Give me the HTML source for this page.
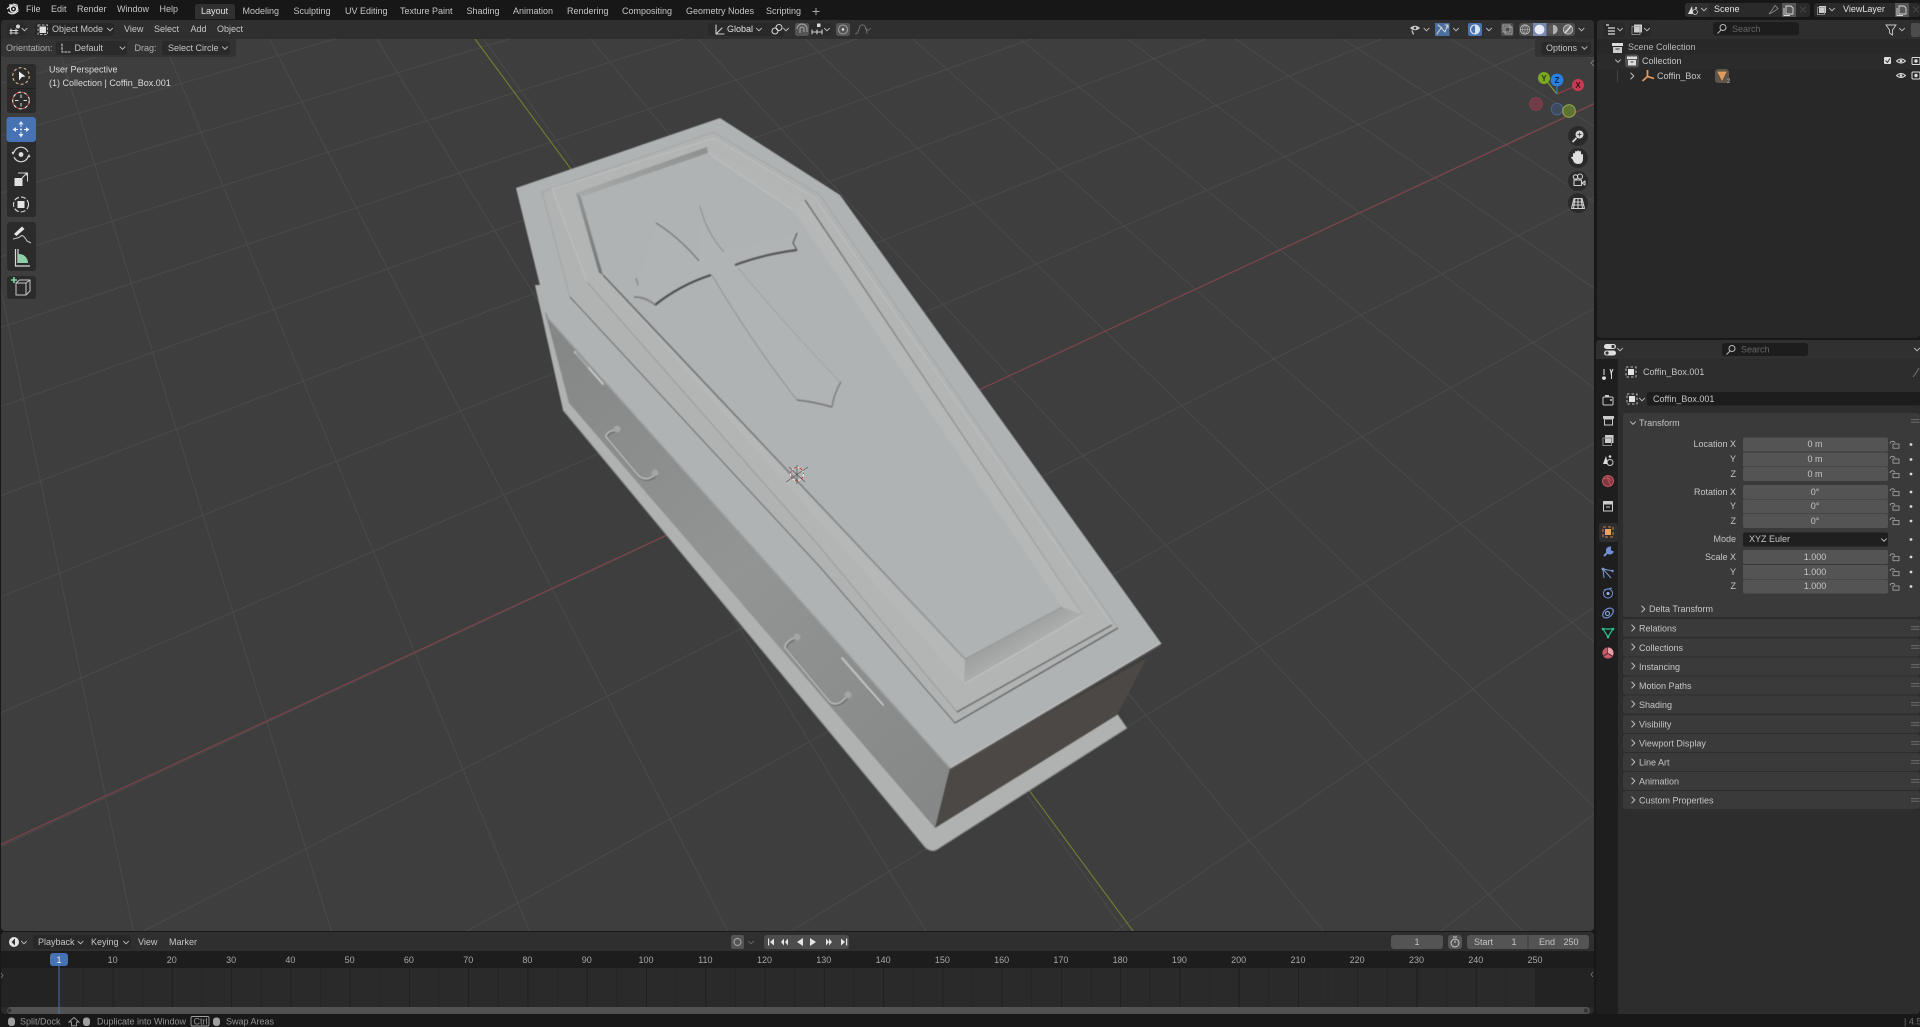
<!DOCTYPE html>
<html><head><meta charset="utf-8"><title>Blender</title>
<style>
html,body{margin:0;padding:0;width:1920px;height:1027px;overflow:hidden;background:#181818}
svg{display:block;filter:blur(.3px);overflow:hidden}
text{font-family:"Liberation Sans",sans-serif;font-size:9px;fill:#c6c6c6}
.d{fill:#959595}.b{fill:#e2e2e2}.c{text-anchor:middle}.r{text-anchor:end}
.ic{fill:none;stroke:#cfcfcf;stroke-width:1.1;stroke-linecap:round;stroke-linejoin:round}
.ch{fill:none;stroke:#bdbdbd;stroke-width:1;stroke-linecap:round;stroke-linejoin:round}
.num{fill:#a8a8a8;text-anchor:middle}
.soft{filter:blur(.45px)}
</style></head><body>
<svg width="1920" height="1027" viewBox="0 0 1920 1027" xmlns="http://www.w3.org/2000/svg">
<defs>
<clipPath id="vp"><rect x="1" y="20" width="1593" height="911" rx="4"/></clipPath>
<path id="cd" class="ch" d="M-2.5,-1.2L0,1.3L2.5,-1.2"/>
<path id="cr" class="ch" d="M-1.2,-3L1.8,0L-1.2,3"/>
<g id="lock"><path d="M-5,-1.5a2.6,2.6 0 0 1 5,-0.5" fill="none" stroke="#a8a8a8" stroke-width=".8"/><rect x="-2" y="-1" width="6" height="4.2" fill="none" stroke="#a8a8a8" stroke-width=".8"/></g>
<g id="hdl"><path d="M-4,-1.4H4.5M-4,1.2H4.5" stroke="#6a6a6a" stroke-width="1"/></g>
<linearGradient id="bevT" x1="0" y1="0" x2="0" y2="1"><stop offset="0" stop-color="#8e8f8f"/><stop offset="1" stop-color="#a8aaaa"/></linearGradient>
<linearGradient id="bevL" gradientUnits="userSpaceOnUse" x1="576" y1="193" x2="600" y2="273"><stop offset="0" stop-color="#939494"/><stop offset="1" stop-color="#767777"/></linearGradient>
<linearGradient id="edge" gradientUnits="userSpaceOnUse" x1="603" y1="275" x2="965" y2="659"><stop offset="0" stop-color="#6a6b6b"/><stop offset=".5" stop-color="#7a7b7b"/><stop offset="1" stop-color="#98999a"/></linearGradient>
<linearGradient id="edgeR" gradientUnits="userSpaceOnUse" x1="805" y1="200" x2="1083" y2="615"><stop offset="0" stop-color="#666767"/><stop offset=".4" stop-color="#8a8b8b"/><stop offset="1" stop-color="#a8aaaa"/></linearGradient>
<linearGradient id="side" gradientUnits="userSpaceOnUse" x1="552" y1="325" x2="950" y2="800"><stop offset="0" stop-color="#858787"/><stop offset=".5" stop-color="#939494"/><stop offset="1" stop-color="#868888"/></linearGradient>
<linearGradient id="bevB" gradientUnits="userSpaceOnUse" x1="1000" y1="640" x2="1015" y2="665"><stop offset="0" stop-color="#9fa1a1"/><stop offset="1" stop-color="#b2b4b4"/></linearGradient>
<pattern id="tl" patternUnits="userSpaceOnUse" x="53.3" y="968" width="59.27" height="39"><rect width="59.27" height="39" fill="#2a2a2a"/><rect width="1" height="39" fill="#1f1f1f"/><rect x="29.6" width="1" height="39" fill="#252525"/></pattern>
</defs>

<!-- base -->
<rect width="1920" height="1027" fill="#181818"/>

<!-- VIEWPORT -->
<g clip-path="url(#vp)">
<rect x="0" y="20" width="1600" height="912" fill="#3e3e3e"/>
<path id="grid" d="" fill="none" stroke="#4a4a4a" stroke-width="1"/>
<path d="M0,845L1594,104" stroke="#84424c" stroke-width="1.1" fill="none"/>
<path d="M475,39L1133,931" stroke="#6e8030" stroke-width="1.1" fill="none"/>

<!-- coffin -->
<g class="soft">
<!-- base band -->
<path d="M535,285L563,410L925,847Q930,852 936,850L1127,728L1116,712L935,800L569,395L560,320L545,285Z" fill="#b0b2b2"/>
<path d="M563,410L925,847Q930,852 936,850L1127,728" fill="none" stroke="#8f9090" stroke-width="1"/>
<!-- side -->
<path d="M545,312L569,403L935,828L955,762Z" fill="url(#side)"/>
<!-- front -->
<path d="M950,768L935,828L1117,715L1147,658Z" fill="#4c4845"/>
<!-- lid -->
<path d="M516,188L720,118L840,195L1161,643L950,768L548,318Z" fill="#b0b3b3"/>
<path d="M1161,643L950,768" stroke="#bcbebe" stroke-width="1.5" fill="none"/>
<path d="M548,318L950,768" stroke="#a0a2a2" stroke-width="1.5" fill="none"/>
<path d="M950,770L1161,645" stroke="#5c5a58" stroke-width=".8" fill="none"/>
<!-- outer ring lines -->
<path d="M542,192L713,132L820,195L1118,628L955,723L820,567L570,297Z" fill="#b1b3b3" stroke="#a3a5a5" stroke-width="1"/>
<path d="M570,297L820,567L955,723" fill="none" stroke="#747575" stroke-width="1.1"/>
<path d="M955,723L1118,628" fill="none" stroke="#5f6060" stroke-width="1.3"/>
<path d="M552,189L714,138L815,198L1112,625L957,712L820,547L587,282Z" fill="#b3b5b5" stroke="#bfc1c1" stroke-width="1"/>
<path d="M587,282L820,547L957,712" fill="none" stroke="#9a9b9b" stroke-width="1.1"/>
<path d="M957,712L1112,625" fill="none" stroke="#686969" stroke-width="1.3"/>
<!-- plate -->
<path d="M576,193L707,147L805,200L1083,615L964,684L599,273Z" fill="#b4b6b6"/>
<path d="M576,193L707,147L708,153L581,197Z" fill="url(#bevT)"/>
<path d="M576,193L599,273L603,275L581,197Z" fill="url(#bevL)"/>
<path d="M964,684L1083,615L1062,607L965,659Z" fill="url(#bevB)"/>
<path d="M599,273L964,684L965,659L603,275Z" fill="#b6b8b8"/>
<path d="M805,200L1083,615L1062,607L793,210Z" fill="#b6b8b8"/>
<path d="M581,197L708,153L793,210L1062,607L965,659L603,275Z" fill="#b0b3b3"/>
<path d="M603,275L965,659" stroke="url(#edge)" stroke-width="1.6" fill="none"/>
<path d="M805,200L1083,615" stroke="url(#edgeR)" stroke-width="1.3" fill="none"/>
<path d="M965,659L1062,607" stroke="#989a9a" stroke-width="1" fill="none"/>
<path d="M964,684L1083,615" stroke="#c4c6c6" stroke-width="1" fill="none"/>
<path d="M708,153L793,210" stroke="#c0c2c2" stroke-width="1" fill="none"/>
<!-- cross -->
<path d="M634,297L655,305Q680,285 711,275L797,400Q815,402 832,407Q834,393 841,382L738,268Q770,255 797,250L793,243L797,233L724,252L700,206L699,261L656,223L634,297Z" fill="#b2b5b5" opacity=".55"/>
<path d="M655,305Q680,285 711,275" stroke="#4c4c4c" stroke-width="2.2" fill="none"/>
<path d="M735,265Q765,254 797,250" stroke="#555" stroke-width="2.2" fill="none"/>
<path d="M634,297Q646,297 655,305" stroke="#808181" stroke-width="1.8" fill="none"/>
<path d="M797,233L793,243L797,250" stroke="#5c5c5c" stroke-width="1.2" fill="none"/>
<path d="M636,278L638,285" stroke="#777" stroke-width="1" fill="none"/>
<path d="M656,223Q680,238 699,261" stroke="#727272" stroke-width="1.1" fill="none"/>
<path d="M700,206Q706,232 724,252" stroke="#8a8b8b" stroke-width=".9" fill="none"/>
<path d="M712,275Q750,340 797,400" stroke="#939494" stroke-width="1" fill="none"/>
<path d="M738,268Q790,330 840,382" stroke="#9c9d9d" stroke-width=".8" fill="none"/>
<path d="M797,400Q815,402 832,407" stroke="#747575" stroke-width="1.6" fill="none"/>
<path d="M841,382Q834,393 832,407" stroke="#7c7d7d" stroke-width="1.4" fill="none"/>
<!-- handles -->
<g fill="none" stroke-linecap="round">
<path d="M617,430Q606,431 606,437L638,475Q646,483 656,474" stroke="#6f7070" stroke-width="2.6" transform="translate(.8,1)"/>
<path d="M617,430Q606,431 606,437L638,475Q646,483 656,474" stroke="#b4b6b6" stroke-width="1.8"/>
<path d="M797,637Q785,641 785,648L830,702Q838,708 848,695" stroke="#6f7070" stroke-width="2.6" transform="translate(.8,1)"/>
<path d="M797,637Q785,641 785,648L830,702Q838,708 848,695" stroke="#b4b6b6" stroke-width="1.8"/>
<path d="M575,352L603,384" stroke="#c8caca" stroke-width="2"/>
<path d="M576,353L588,367" stroke="#777" stroke-width=".6"/>
<path d="M842,658L883,705" stroke="#c4c6c6" stroke-width="2"/>
<path d="M868,690L882,706" stroke="#777" stroke-width=".6"/>
</g>
<g fill="#a4a6a6"><circle cx="617" cy="429" r="3.5"/><circle cx="655" cy="473" r="3.5"/><circle cx="797" cy="637" r="3.5"/><circle cx="848" cy="695" r="3.5"/></g>
</g>
<!-- 3D cursor -->
<circle cx="797" cy="474" r="6.5" fill="none" stroke="#f2f2f2" stroke-width="1" stroke-dasharray="3 3"/>
<circle cx="797" cy="474" r="6.5" fill="none" stroke="#c84444" stroke-width="1" stroke-dasharray="3 3" stroke-dashoffset="3"/>
<path d="M786,482L808,467M797,465V484M789,467L805,482" stroke="#555" stroke-width=".7" fill="none"/>

<!-- tool settings strip -->
<path d="M1,39H236V53Q236,57 232,57H5Q1,57 1,53Z" fill="#333"/>
<rect x="1535" y="39" width="60" height="18" rx="3" fill="#333"/>
<!-- header -->
<rect x="1" y="20" width="1593" height="19" fill="#2f2f2f"/>
</g>

<!-- viewport header content -->
<rect x="7" y="23" width="20" height="13" rx="3" fill="#2a2a2a"/>
<g class="ic" stroke-width="1"><path d="M11,34V29M16,34V29M10,30.5H18M10,33H18"/></g>
<circle cx="18" cy="26.5" r="2" fill="#d4d4d4"/>
<use href="#cd" x="24.5" y="29.5"/>
<rect x="35" y="23" width="79" height="13" rx="3" fill="#272727"/>
<rect x="38" y="25" width="9.5" height="9.5" fill="none" stroke="#bcbcbc" stroke-width=".9" stroke-dasharray="2.5 1.5"/>
<rect x="39.5" y="26.5" width="6.5" height="6.5" fill="#e0e0e0"/>
<text x="52" y="32">Object Mode</text><use href="#cd" x="110" y="29.5"/>
<text x="124" y="32">View</text><text x="154" y="32">Select</text><text x="190.5" y="32">Add</text><text x="217" y="32">Object</text>

<!-- row 2 -->
<text x="6" y="51" class="d" style="fill:#b2b2b2">Orientation:</text>
<rect x="56" y="41" width="71" height="14" rx="3" fill="#2a2a2a"/>
<path d="M62,44V52H70" class="ic" stroke-dasharray="2 1.6"/>
<text x="74.5" y="51">Default</text><use href="#cd" x="122.5" y="48"/>
<text x="134.5" y="51" style="fill:#b2b2b2">Drag:</text>
<rect x="162" y="41" width="68" height="14" rx="3" fill="#2a2a2a"/>
<text x="168" y="51">Select Circle</text><use href="#cd" x="225" y="48"/>

<!-- center header -->
<rect x="708" y="23" width="76" height="13" rx="3" fill="#292929"/>
<path d="M716,25V34H724M716,34L722,28" class="ic"/>
<text x="727" y="32" class="b">Global</text><use href="#cd" x="759" y="29.5"/>
<g class="ic"><circle cx="775" cy="31" r="3"/><circle cx="779" cy="27.5" r="3"/></g><use href="#cd" x="786" y="29.5"/>
<rect x="795" y="23" width="14" height="13" rx="2.5" fill="#545454"/>
<g fill="none" stroke="#a8a8a8" stroke-width="1"><path d="M797,29a5,5 0 0 1 10,0v3"/><path d="M800,33v-4a2,2 0 0 1 4,0v3"/></g>
<rect x="810" y="23" width="21" height="13" rx="2.5" fill="#2a2a2a"/>
<path d="M812,30V34M822,30V34M812,32H822M817,30V34" class="ic"/><rect x="817" y="23.5" width="3.5" height="3.5" fill="#d8d8d8"/>
<use href="#cd" x="827" y="29.5"/>
<rect x="836" y="23" width="14" height="13" rx="2.5" fill="#545454"/>
<circle cx="843" cy="29.5" r="4.5" fill="none" stroke="#a0a0a0"/><circle cx="843" cy="29.5" r="1.2" fill="#eee"/>
<path d="M855,34Q858,34 859,29T863,25Q866,25 867,34" fill="none" stroke="#6e6e6e"/><use href="#cd" x="868" y="29.5" opacity=".4"/>

<!-- right header -->
<path d="M1410,28q5,-4.5 10,0q-5,4.5 -10,0Z" fill="#cfcfcf"/><circle cx="1415" cy="28" r="1.3" fill="#333"/><path d="M1412,30.5l1.5,4" stroke="#ccc" stroke-width="1.3"/>
<use href="#cd" x="1426.5" y="29.5"/>
<rect x="1435" y="23" width="14.5" height="13" fill="#4a6f9f"/><path d="M1437,34L1441,28L1445,32L1447.5,25M1445,25h3v3M1438,25l4,3" class="ic"/>
<use href="#cd" x="1456" y="29.5"/>
<rect x="1468" y="23" width="14" height="13" rx="2" fill="#4a72ad"/><circle cx="1475" cy="29.5" r="4.5" fill="none" stroke="#d8e2f0" stroke-width="1.2"/><path d="M1475,25a4.5,4.5 0 0 1 0,9Z" fill="#d8e2f0"/>
<use href="#cd" x="1489" y="29.5"/>
<rect x="1501" y="23" width="12.5" height="13" rx="2" fill="#4e4e4e"/><rect x="1503" y="25" width="7" height="7" fill="none" stroke="#bbb" stroke-width=".8"/><rect x="1505" y="27" width="7" height="7" fill="none" stroke="#bbb" stroke-width=".8"/>
<rect x="1519" y="23" width="56" height="13" rx="3" fill="#4e4e4e"/>
<rect x="1533" y="23" width="13.5" height="13" fill="#7b8ab0"/>
<circle cx="1525" cy="29.5" r="4.7" fill="none" stroke="#c0c0c0" stroke-width=".8"/><path d="M1520.5,29.5H1529.5M1525,25V34" stroke="#c0c0c0" stroke-width=".6"/><ellipse cx="1525" cy="29.5" rx="2.4" ry="4.7" fill="none" stroke="#c0c0c0" stroke-width=".6"/>
<circle cx="1539.5" cy="29.5" r="4.9" fill="#e8ecf4"/>
<circle cx="1553" cy="29.5" r="4.7" fill="#b0b0b0"/><path d="M1553,24.8a4.7,4.7 0 0 0 0,9.4Z" fill="#333" opacity=".7"/>
<circle cx="1568" cy="29.5" r="4.7" fill="#777" stroke="#ccc" stroke-width=".8"/><path d="M1565,33L1571,26" stroke="#ddd" stroke-width="1.4"/>
<use href="#cd" x="1581.5" y="29.5"/>
<rect x="1541" y="42" width="50" height="13" rx="3" fill="#2a2a2a"/><text x="1546" y="51">Options</text><use href="#cd" x="1584.5" y="48"/>

<!-- info text -->
<text x="49" y="72.5" class="b" style="fill:#dcdcdc">User Perspective</text>
<text x="49" y="86" class="b" style="fill:#dcdcdc">(1) Collection | Coffin_Box.001</text>

<!-- toolbar -->
<rect x="7" y="64" width="29" height="49" rx="3" fill="#2b2b2b"/>
<rect x="7" y="117" width="29" height="100" rx="3" fill="#2b2b2b"/>
<rect x="6.5" y="117" width="29.5" height="25" rx="3" fill="#4772b3"/>
<rect x="7" y="222" width="29" height="49" rx="3" fill="#2b2b2b"/>
<rect x="7" y="276" width="29" height="23" rx="3" fill="#2b2b2b"/>
<path d="M7,88.5H36" stroke="#222"/>
<circle cx="21" cy="76" r="8.3" fill="none" stroke="#d2b48c" stroke-width="1.1" stroke-dasharray="3 2.2"/>
<path d="M19,71.5L25.5,76.5L21.8,77L19,80.5Z" fill="#eee"/>
<circle cx="21" cy="100.5" r="8.3" fill="none" stroke="#e8e8e8" stroke-width="1.1" stroke-dasharray="3 3"/><circle cx="21" cy="100.5" r="8.3" fill="none" stroke="#c84b4b" stroke-width="1.1" stroke-dasharray="3 3" stroke-dashoffset="3"/>
<path d="M21,94.5V98M21,103V106.5M15,100.5H18.5M23.5,100.5H27" stroke="#ddd" stroke-width="1"/>
<g fill="#e8eef8"><path d="M21,121L18.6,124.5H23.4Z"/><path d="M21,137.5L18.6,134H23.4Z"/><path d="M12.5,129.5L16,127.1V131.9Z"/><path d="M29.5,129.5L26,127.1V131.9Z"/><circle cx="21" cy="129.5" r="1"/></g>
<path d="M21,125V127M21,132V134M16,129.5H18M24,129.5H26" stroke="#e8eef8" stroke-width="1"/>
<path d="M14,152a7.5,7.5 0 0 1 14,0M28,157a7.5,7.5 0 0 1 -14,0" fill="none" stroke="#d8d8d8" stroke-width="1.2"/><circle cx="21" cy="154.5" r="2.4" fill="#ddd"/>
<path d="M13,155L15,151.5L11.5,152ZM29,154L27,157.5L30.5,157Z" fill="#ddd"/>
<rect x="14.5" y="178" width="8" height="8" fill="#e0e0e0"/><path d="M18,173H27.5V181.5" fill="none" stroke="#d0d0d0" stroke-width="1"/><path d="M22,178L27,173M24,173H27V176" fill="none" stroke="#ddd" stroke-width="1"/>
<circle cx="21" cy="204.5" r="7.5" fill="none" stroke="#d8d8d8" stroke-width="1.1" stroke-dasharray="5 2"/><rect x="17.5" y="201" width="7" height="7" fill="#e4e4e4"/>
<path d="M14,234L22,226.5L24.5,229L16.5,236Z" fill="#e6e6e6"/><path d="M13,239Q19,238 21,236T27,241L31,243" fill="none" stroke="#c8c8c8" stroke-width="1"/>
<path d="M15.5,249V266H30M18,249V263" fill="none" stroke="#d8d8d8" stroke-width="1.2"/><path d="M18,263V254A9,9 0 0 1 28,263Z" fill="#8fd0a8"/>
<path d="M16,283L19.5,280H30V291L26,295H16Z M16,283H26V295M26,283L30,280" fill="none" stroke="#c8c8c8" stroke-width="1"/>
<path d="M14,277V283M11,280H17" stroke="#7fd89b" stroke-width="1.6"/>

<!-- gizmo -->
<path d="M1557,94L1578,85" stroke="#8a3a48" stroke-width="1.3"/><path d="M1557,94L1544,78" stroke="#7a9a2a" stroke-width="1.3"/><path d="M1557,94V82" stroke="#2d7ad0" stroke-width="1.3"/>
<circle cx="1536" cy="104" r="6.3" fill="#6f3b46" stroke="#8d3f4e"/>
<circle cx="1557" cy="109" r="5.8" fill="#3f4a5e" stroke="#47648c"/>
<circle cx="1569" cy="111" r="6.3" fill="#5f7232" stroke="#9aae50"/>
<circle cx="1578" cy="85" r="6" fill="#c93a52"/><text x="1578" y="88" class="c" style="fill:#3a0f18;font-weight:bold;font-size:8px">X</text>
<circle cx="1544" cy="78" r="6" fill="#7aaa22"/><text x="1544" y="81" class="c" style="fill:#24360a;font-weight:bold;font-size:8px">Y</text>
<circle cx="1557" cy="80" r="6.4" fill="#2a80e0"/><text x="1557" y="83" class="c" style="fill:#0a2850;font-weight:bold;font-size:8px">Z</text>

<!-- nav buttons -->
<g fill="#2a2a2a"><circle cx="1578" cy="136" r="10"/><circle cx="1578" cy="158" r="10"/><circle cx="1578" cy="181" r="10"/><circle cx="1578" cy="203" r="10"/></g>
<circle cx="1579.5" cy="134.5" r="4" fill="#d8d8d8"/><path d="M1576.5,138L1572.5,142" stroke="#d8d8d8" stroke-width="1.8"/><path d="M1579.5,132.5v4M1577.5,134.5h4" stroke="#444" stroke-width=".9"/>
<path d="M1573,157V154a1,1 0 0 1 2,0V152a1,1 0 0 1 2,0V151.5a1,1 0 0 1 2,0V152a1,1 0 0 1 2,0V155a1,1 0 0 1 2,0V159Q1583,164 1578,164Q1574,164 1573,160L1571,157.5Q1572,156 1573,157Z" fill="#dedede"/>
<g class="ic"><circle cx="1575.5" cy="177" r="2.2"/><circle cx="1580" cy="176.5" r="2.5"/><rect x="1574" y="180" width="7.5" height="5.5"/><path d="M1582,183L1585,181V185Z"/></g>
<g class="ic" stroke-width=".9"><path d="M1574,198.5H1582L1584.5,208.5H1571.5ZM1578,198.5V208.5M1575,198.5L1573.5,208.5M1581,198.5L1582.5,208.5M1573,202H1583M1572.5,205H1583.7"/></g>
<path d="M1594,60l-3,3 3,3" fill="none" stroke="#888" stroke-width=".8"/>

<!-- TOP BAR -->
<rect x="0" y="0" width="1920" height="19" fill="#171717"/>
<circle cx="13.5" cy="9" r="3.2" fill="none" stroke="#e6e6e6" stroke-width="1.4"/><circle cx="13.5" cy="9" r="1.1" fill="#e6e6e6"/><path d="M7,9L12,5H9M8,12Q13,16 18,11L17,5L13,4" fill="none" stroke="#e6e6e6" stroke-width="1.2"/>
<text x="26" y="12">File</text><text x="51" y="12">Edit</text><text x="77" y="12">Render</text><text x="117" y="12">Window</text><text x="159.5" y="12">Help</text>
<path d="M195,19V7Q195,4 198,4H232Q235,4 235,7V19Z" fill="#303030"/>
<text x="201" y="14" class="b">Layout</text>
<g class="d"><text x="242.5" y="14">Modeling</text><text x="293.5" y="14">Sculpting</text><text x="345" y="14">UV Editing</text><text x="400" y="14">Texture Paint</text><text x="466.5" y="14">Shading</text><text x="513" y="14">Animation</text><text x="567" y="14">Rendering</text><text x="622" y="14">Compositing</text><text x="686" y="14">Geometry Nodes</text><text x="766" y="14">Scripting</text></g>
<path d="M812.5,11.5h7M816,8v7" stroke="#aaa" stroke-width="1"/>
<rect x="1685" y="3" width="125" height="14" rx="3" fill="#2a2a2a"/>
<rect x="1685" y="3" width="24" height="14" rx="3" fill="#303030"/>
<path d="M1692,6L1688,14H1693ZM1696,7a1,1 0 1 0 .1,0" fill="#ddd"/><circle cx="1695" cy="12" r="2.5" fill="none" stroke="#ccc" stroke-width=".8"/><use href="#cd" x="1704" y="9.5"/>
<text x="1714" y="12" class="b">Scene</text>
<path d="M1769,14L1772,10L1775,5.5L1778,8.5L1774,11.5Z" fill="none" stroke="#8c8c8c" stroke-width=".8"/>
<rect x="1782" y="3" width="14" height="14" fill="#565656"/><path d="M1786,6h5l2,2v6h-7zM1784,8v7.5h6" fill="none" stroke="#d8d8d8" stroke-width=".9"/>
<path d="M1800,6.5L1806,12.5M1806,6.5L1800,12.5" stroke="#444" stroke-width="1"/>
<rect x="1814" y="3" width="106" height="14" rx="3" fill="#2a2a2a"/>
<rect x="1819" y="6" width="7" height="7" fill="#ccc"/><rect x="1817.5" y="7.5" width="7" height="7" fill="none" stroke="#999" stroke-width=".8"/><use href="#cd" x="1832" y="9.5"/>
<text x="1843" y="12" class="b">ViewLayer</text>
<rect x="1895" y="3" width="14" height="14" fill="#565656"/><path d="M1899,6h5l2,2v6h-7zM1897,8v7.5h6" fill="none" stroke="#d8d8d8" stroke-width=".9"/>
<path d="M1913,6.5L1919,12.5M1919,6.5L1913,12.5" stroke="#444" stroke-width="1"/>

<!-- OUTLINER -->
<rect x="1597" y="20" width="323" height="318" rx="4" fill="#282828"/>
<path d="M1597,24Q1597,20 1601,20H1920V39H1597Z" fill="#2e2e2e"/>
<rect x="1603" y="23" width="22" height="14" rx="3" fill="#292929"/>
<path d="M1606,25h3M1608,28h7M1608,31h7M1608,34h7" stroke="#ddd" stroke-width="1.2"/><use href="#cd" x="1620" y="29.5"/>
<rect x="1629" y="23" width="22" height="14" rx="3" fill="#292929"/>
<rect x="1634" y="24.5" width="8" height="8" fill="#ccc"/><rect x="1632" y="26.5" width="8" height="8" fill="none" stroke="#999" stroke-width=".8"/><use href="#cd" x="1647" y="29.5"/>
<rect x="1713" y="22" width="86" height="13.5" rx="3" fill="#1d1d1d"/>
<circle cx="1723" cy="27.5" r="3" fill="none" stroke="#bbb"/><path d="M1721,30L1717.5,33.5" stroke="#bbb"/>
<text x="1732" y="32" style="fill:#666">Search</text>
<path d="M1886,25H1896L1892.5,30V35L1889.5,33V30Z" fill="none" stroke="#ccc" stroke-width=".9"/><use href="#cd" x="1902" y="29.5"/>
<rect x="1911" y="23" width="9" height="14" rx="2" fill="#4c4c4c"/>
<rect x="1597" y="54" width="323" height="15" fill="#2b2b2b"/>
<rect x="1612" y="43" width="11" height="3" fill="#ddd"/><rect x="1613" y="47" width="9" height="6" fill="#ccc"/><path d="M1615.5,49h4" stroke="#333"/>
<text x="1628" y="50" style="fill:#b8b8b8">Scene Collection</text>
<use href="#cd" x="1618" y="61"/>
<rect x="1625" y="54.5" width="14" height="13" rx="3" fill="#4f4f4f"/>
<rect x="1627" y="56.5" width="10" height="2.6" fill="#ddd"/><rect x="1628" y="60" width="8" height="5.5" fill="#ddd"/><path d="M1630.5,62h3" stroke="#444"/>
<text x="1642" y="64">Collection</text>
<rect x="1884" y="57" width="7" height="7" rx="1" fill="#ddd"/><path d="M1885.5,60.5L1887.5,62.5L1890,58.5" stroke="#333" fill="none"/>
<path d="M1896.5,61q4.5,-4 9,0q-4.5,4 -9,0Z" fill="none" stroke="#ddd"/><circle cx="1901" cy="61" r="1.3" fill="#ddd"/>
<rect x="1912" y="57.5" width="8" height="7" rx="1" fill="none" stroke="#ddd"/><circle cx="1916" cy="61" r="1.7" fill="#ddd"/>
<path d="M1617.5,70V82" stroke="#444"/>
<use href="#cr" x="1632" y="76"/>
<path d="M1647.5,70V76.5M1647.5,76.5L1642.5,81M1647.5,76.5L1654,78.5" stroke="#e89a5a" stroke-width="1.7" fill="none"/>
<text x="1657" y="79">Coffin_Box</text>
<rect x="1715" y="69" width="14" height="14" rx="3" fill="#5e5549"/>
<path d="M1718,72H1726L1722,80Z" fill="#e09a5a" stroke="#e8a86a" stroke-width=".8"/><text x="1727" y="83" style="font-size:6px">2</text>
<path d="M1896.5,75.5q4.5,-4 9,0q-4.5,4 -9,0Z" fill="none" stroke="#ddd"/><circle cx="1901" cy="75.5" r="1.3" fill="#ddd"/>
<rect x="1912" y="72" width="8" height="7" rx="1" fill="none" stroke="#ddd"/><circle cx="1916" cy="75.5" r="1.7" fill="#ddd"/>

<!-- PROPERTIES -->
<rect x="1596" y="340" width="324" height="674" rx="4" fill="#2d2d2d"/>
<path d="M1596,344Q1596,340 1600,340H1920V359H1596Z" fill="#303030"/>
<rect x="1604" y="344" width="12" height="5" rx="2.5" fill="#e0e0e0"/><rect x="1604" y="350.5" width="12" height="5" rx="2.5" fill="#e0e0e0"/><circle cx="1613" cy="346.5" r="1.6" fill="#333"/><circle cx="1607" cy="353" r="1.6" fill="#333"/>
<use href="#cd" x="1620" y="349.5"/>
<rect x="1722" y="343" width="86" height="13" rx="3" fill="#1d1d1d"/>
<circle cx="1732" cy="348.5" r="3" fill="none" stroke="#bbb"/><path d="M1730,351L1726.5,354.5" stroke="#bbb"/>
<text x="1741" y="352.5" style="fill:#666">Search</text><use href="#cd" x="1917" y="349.5"/>
<!-- tab column -->
<path d="M1596,359H1618V1014H1600Q1596,1014 1596,1010Z" fill="#1e1e1e"/>
<rect x="1599" y="523" width="19" height="19" rx="3" fill="#2f2f2f"/>
<path d="M1604,369V375M1603,377a1.4,1.4 0 1 0 2,0ZM1610,369L1611.5,372.5V379M1613,369L1611.5,372.5" stroke="#ddd" fill="#ddd" stroke-width="1"/>
<rect x="1603" y="397" width="10" height="8" rx="1" fill="none" stroke="#ccc"/><rect x="1605" y="395" width="4" height="2" fill="#ccc"/><circle cx="1611" cy="400" r="1" fill="#ccc"/>
<rect x="1603" y="416" width="11" height="2.8" fill="#ccc"/><rect x="1604.5" y="419" width="8" height="6" fill="none" stroke="#ccc"/>
<rect x="1605" y="435" width="8.5" height="8" fill="#ccc"/><rect x="1603" y="438" width="8.5" height="7.5" fill="none" stroke="#888"/>
<path d="M1606,456L1603,464H1608Z" fill="#ddd"/><circle cx="1610" cy="456.5" r="1.3" fill="#ddd"/><circle cx="1610" cy="462.5" r="3" fill="none" stroke="#ccc"/>
<circle cx="1608" cy="481" r="5.5" fill="#7a3a3e" stroke="#c65560"/><path d="M1604,479q4,-3 7,2M1608,476q-1,5 3,9" stroke="#c65560" fill="none"/>
<rect x="1603" y="501" width="10" height="2.8" fill="#ccc"/><rect x="1603.5" y="504" width="9" height="7" fill="none" stroke="#ccc"/><path d="M1606,507h4" stroke="#ccc"/>
<rect x="1603" y="527" width="10" height="10" fill="none" stroke="#c98048" stroke-dasharray="3 2"/><rect x="1605" y="529" width="6" height="6" fill="#e9a15e"/>
<path d="M1604,556L1610,550M1610,547.5a3,3 0 1 0 2.5,4.5l-2.5,-1z" stroke="#6f8fd8" stroke-width="2" fill="#6f8fd8"/>
<path d="M1603,569L1611,578M1603,569L1613,571M1603,569L1604,578" stroke="#7a9ad0" fill="none"/><circle cx="1603" cy="569" r="1.4" fill="#7a9ad0"/><circle cx="1612.5" cy="571" r="1.2" fill="#7a9ad0"/>
<circle cx="1608" cy="593.5" r="4.6" fill="none" stroke="#6f8fd8"/><circle cx="1608" cy="593.5" r="1.5" fill="#9ab4ee"/><path d="M1604,590l8,-2" stroke="#6f8fd8"/>
<ellipse cx="1608" cy="613" rx="6" ry="4" transform="rotate(-40 1608 613)" fill="none" stroke="#6f8fd8" stroke-width="1.2"/><circle cx="1607.5" cy="613.5" r="2" fill="none" stroke="#9ab4ee"/>
<path d="M1603,629H1613L1608,637Z" fill="none" stroke="#29c38a" stroke-width="1.2"/><circle cx="1603" cy="629" r="1.3" fill="#29c38a"/><circle cx="1613" cy="629" r="1.3" fill="#29c38a"/><circle cx="1608" cy="637" r="1.3" fill="#29c38a"/>
<circle cx="1608" cy="653" r="5.6" fill="#c65a66"/><path d="M1608,647.5V653L1603.5,656M1608,653L1612,656" stroke="#3a2a2c" fill="none"/><path d="M1608,647.5a5.6,5.6 0 0 1 4.8,8L1608,653Z" fill="#e8a0a8"/>

<!-- object header -->
<rect x="1626" y="367" width="10" height="10" fill="none" stroke="#bbb" stroke-dasharray="2.5 2"/><rect x="1628" y="369" width="6" height="6" fill="#e4e4e4"/>
<text x="1643" y="375">Coffin_Box.001</text>
<path d="M1913,377L1916,373L1919,368" stroke="#777" fill="none"/>
<rect x="1627" y="394" width="10" height="10" fill="none" stroke="#bbb" stroke-dasharray="2.5 2"/><rect x="1629" y="396" width="6" height="6" fill="#e4e4e4"/>
<use href="#cd" x="1642" y="399.5"/>
<rect x="1647" y="392" width="273" height="13.5" rx="2" fill="#1d1d1d"/>
<text x="1653" y="402">Coffin_Box.001</text>

<!-- Transform panel -->
<rect x="1623" y="413" width="297" height="204" rx="3" fill="#3a3a3a"/>
<use href="#cd" x="1633" y="423"/>
<text x="1639" y="426" >Transform</text>
<use href="#hdl" x="1915" y="421"/>
<g>
<text x="1736" y="447" class="r">Location X</text><text x="1736" y="462" class="r">Y</text><text x="1736" y="477" class="r">Z</text>
<text x="1736" y="495" class="r">Rotation X</text><text x="1736" y="509" class="r">Y</text><text x="1736" y="524" class="r">Z</text>
<text x="1736" y="542" class="r">Mode</text>
<text x="1736" y="560" class="r">Scale X</text><text x="1736" y="575" class="r">Y</text><text x="1736" y="589" class="r">Z</text>
</g>
<g fill="#545454">
<rect x="1743" y="437.5" width="145" height="14" rx="2"/><rect x="1743" y="452.5" width="145" height="14"/><rect x="1743" y="467" width="145" height="14" rx="2"/>
<rect x="1743" y="485" width="145" height="14" rx="2"/><rect x="1743" y="499.5" width="145" height="14"/><rect x="1743" y="514" width="145" height="14" rx="2"/>
<rect x="1743" y="550" width="145" height="14" rx="2"/><rect x="1743" y="565" width="145" height="14"/><rect x="1743" y="579.5" width="145" height="14" rx="2"/>
</g>
<rect x="1743" y="532.5" width="145" height="14" rx="2" fill="#1f1f1f"/>
<g>
<text x="1815" y="447" class="c">0 m</text><text x="1815" y="462" class="c">0 m</text><text x="1815" y="477" class="c">0 m</text>
<text x="1815" y="495" class="c">0°</text><text x="1815" y="509" class="c">0°</text><text x="1815" y="524" class="c">0°</text>
<text x="1815" y="560" class="c">1.000</text><text x="1815" y="575" class="c">1.000</text><text x="1815" y="589" class="c">1.000</text>
</g>
<text x="1749" y="542">XYZ Euler</text><use href="#cd" x="1884" y="540"/>
<g><use href="#lock" x="1895" y="445"/><use href="#lock" x="1895" y="460"/><use href="#lock" x="1895" y="474.5"/><use href="#lock" x="1895" y="492.5"/><use href="#lock" x="1895" y="507"/><use href="#lock" x="1895" y="521.5"/><use href="#lock" x="1895" y="557.5"/><use href="#lock" x="1895" y="572.5"/><use href="#lock" x="1895" y="587"/></g>
<g fill="#d8d8d8"><circle cx="1911" cy="444.5" r="1.4"/><circle cx="1911" cy="459.5" r="1.4"/><circle cx="1911" cy="474" r="1.4"/><circle cx="1911" cy="492" r="1.4"/><circle cx="1911" cy="506.5" r="1.4"/><circle cx="1911" cy="521" r="1.4"/><circle cx="1911" cy="539.5" r="1.4"/><circle cx="1911" cy="557" r="1.4"/><circle cx="1911" cy="572" r="1.4"/><circle cx="1911" cy="586.5" r="1.4"/></g>
<use href="#cr" x="1643" y="609"/>
<text x="1649" y="612">Delta Transform</text>

<!-- collapsed panels -->
<g fill="#3a3a3a"><rect x="1623" y="619" width="297" height="18" rx="3"/><rect x="1623" y="638.5" width="297" height="18" rx="3"/><rect x="1623" y="657.5" width="297" height="18" rx="3"/><rect x="1623" y="676.5" width="297" height="18" rx="3"/><rect x="1623" y="695.5" width="297" height="18" rx="3"/><rect x="1623" y="715" width="297" height="18" rx="3"/><rect x="1623" y="734" width="297" height="18" rx="3"/><rect x="1623" y="753" width="297" height="18" rx="3"/><rect x="1623" y="772" width="297" height="18" rx="3"/><rect x="1623" y="791" width="297" height="18" rx="3"/></g>
<g><use href="#cr" x="1633" y="628"/><use href="#cr" x="1633" y="647"/><use href="#cr" x="1633" y="666"/><use href="#cr" x="1633" y="685"/><use href="#cr" x="1633" y="704"/><use href="#cr" x="1633" y="724"/><use href="#cr" x="1633" y="743"/><use href="#cr" x="1633" y="762"/><use href="#cr" x="1633" y="781"/><use href="#cr" x="1633" y="800"/>
<use href="#hdl" x="1915" y="628"/><use href="#hdl" x="1915" y="647"/><use href="#hdl" x="1915" y="666"/><use href="#hdl" x="1915" y="685"/><use href="#hdl" x="1915" y="704"/><use href="#hdl" x="1915" y="724"/><use href="#hdl" x="1915" y="743"/><use href="#hdl" x="1915" y="762"/><use href="#hdl" x="1915" y="781"/><use href="#hdl" x="1915" y="800"/></g>
<text x="1639" y="631.5">Relations</text><text x="1639" y="651">Collections</text><text x="1639" y="670">Instancing</text><text x="1639" y="689">Motion Paths</text><text x="1639" y="708">Shading</text><text x="1639" y="727.5">Visibility</text><text x="1639" y="746.5">Viewport Display</text><text x="1639" y="765.5">Line Art</text><text x="1639" y="784.5">Animation</text><text x="1639" y="803.5">Custom Properties</text>

<!-- TIMELINE -->
<rect x="1" y="932" width="1593" height="82" rx="4" fill="#2a2a2a"/>
<path d="M1,936Q1,932 5,932H1590Q1594,932 1594,936V951H1Z" fill="#2f2f2f"/>
<rect x="1" y="951" width="1593" height="17" fill="#1d1d1d"/>
<rect x="1" y="968" width="1593" height="39" fill="#232323"/>
<rect x="59" y="968" width="1476" height="39" fill="url(#tl)"/>
<circle cx="14" cy="942" r="5" fill="#e4e4e4"/><path d="M15,938.5L11.5,942L15,945.5Z" fill="#2f2f2f"/><use href="#cd" x="24" y="942.5"/>
<rect x="33" y="935" width="98" height="14" rx="3" fill="#282828"/>
<text x="38" y="945">Playback</text><use href="#cd" x="80.5" y="942.5"/><text x="91" y="945">Keying</text><use href="#cd" x="126" y="942.5"/><text x="138" y="945">View</text><text x="169" y="945">Marker</text>
<rect x="731" y="935" width="13" height="14" rx="2" fill="#545454"/><circle cx="737.5" cy="942" r="3.5" fill="none" stroke="#aaa"/><use href="#cd" x="751" y="942.5" opacity=".4"/>
<rect x="764" y="935" width="85" height="14" rx="3" fill="#4c4c4c"/>
<g fill="#e4e4e4"><path d="M768,938.5h1.2v7h-1.2zM770,942l4,-3.5v7z"/><path d="M781,942l3,-3.5v7zM785,942l3,-3.5l0,7z"/><path d="M803,938L797,942L803,946Z"/><path d="M810,938L816,942L810,946Z"/><path d="M826,938.5v7l3,-3.5zM829,938.5l3,3.5l-3,3.5z"/><path d="M841,938.5l4,3.5l-4,3.5zM846,938.5h1.2v7H846z"/></g>
<rect x="1391" y="935" width="52" height="14" rx="3" fill="#545454"/><text x="1417" y="945" class="c">1</text>
<rect x="1448" y="935" width="14" height="14" rx="3" fill="#545454"/><circle cx="1455" cy="943" r="4" fill="none" stroke="#ccc"/><path d="M1455,940.5v2.5M1453,937h4" stroke="#ccc"/>
<rect x="1467" y="935" width="122" height="14" rx="3" fill="#545454"/><path d="M1528,935V949" stroke="#3a3a3a"/>
<text x="1474" y="945">Start</text><text x="1514" y="945" class="c">1</text><text x="1539" y="945">End</text><text x="1571" y="945" class="c">250</text>
<!-- ruler numbers -->
<rect x="50" y="953" width="18" height="13" rx="3" fill="#4772b3"/><text x="59" y="963" class="c" style="fill:#f0f0f0">1</text>
<g>
<text x="112.6" y="963" class="num">10</text><text x="171.8" y="963" class="num">20</text><text x="231.1" y="963" class="num">30</text><text x="290.4" y="963" class="num">40</text><text x="349.6" y="963" class="num">50</text><text x="408.9" y="963" class="num">60</text><text x="468.2" y="963" class="num">70</text><text x="527.4" y="963" class="num">80</text><text x="586.7" y="963" class="num">90</text><text x="646" y="963" class="num">100</text><text x="705.3" y="963" class="num">110</text><text x="764.5" y="963" class="num">120</text><text x="823.8" y="963" class="num">130</text><text x="883.1" y="963" class="num">140</text><text x="942.4" y="963" class="num">150</text><text x="1001.6" y="963" class="num">160</text><text x="1060.9" y="963" class="num">170</text><text x="1120.2" y="963" class="num">180</text><text x="1179.4" y="963" class="num">190</text><text x="1238.7" y="963" class="num">200</text><text x="1298" y="963" class="num">210</text><text x="1357.2" y="963" class="num">220</text><text x="1416.5" y="963" class="num">230</text><text x="1475.8" y="963" class="num">240</text><text x="1535" y="963" class="num">250</text>
</g>
<rect x="7" y="1007" width="1583" height="7" rx="3.5" fill="#525252"/>
<circle cx="9.5" cy="1010.5" r="2" fill="#333"/><circle cx="1586" cy="1010.5" r="2" fill="#333"/>
<path d="M59,966V1014" stroke="#4772b3" stroke-width="1"/>
<path d="M1,973l2,2.5l-2,2.5" fill="none" stroke="#777" stroke-width=".8"/>
<path d="M1593,972l-2,2.5l2,2.5" fill="none" stroke="#777" stroke-width=".8"/>

<!-- STATUS BAR -->
<rect x="0" y="1015" width="1920" height="12" fill="#181818"/>
<g fill="#a0a0a0" stroke="none"><rect x="8" y="1017.5" width="7" height="8.5" rx="3"/><rect x="83" y="1017.5" width="7" height="8.5" rx="3"/><rect x="213" y="1017.5" width="7" height="8.5" rx="3"/></g>
<path d="M69,1022l5,-4.5l5,4.5h-2.5v3.8h-5v-3.8z" fill="none" stroke="#a0a0a0" stroke-width=".9"/>
<rect x="191" y="1016.5" width="18" height="9.5" rx="1.5" fill="none" stroke="#a0a0a0" stroke-width=".9"/>
<text x="20" y="1024.5" class="d">Split/Dock</text><text x="97" y="1024.5" class="d">Duplicate into Window</text><text x="193.5" y="1024.5" class="d">Ctrl</text><text x="226" y="1024.5" class="d">Swap Areas</text>
<text x="1904" y="1024.5" class="d" style="fill:#6e6e6e">| 4.5</text>
</svg>
<script>
(function(){
var O=[797,475],X=[4000,-1020],Y=[-266,-1004],sx=.0355,sy=.0585,d='';
var L=0,R=1600,T=20,B=932;
function P(u,v){var a=u*sx,b=v*sy,w=1+a+b;return [(O[0]+a*X[0]+b*Y[0])/w,(O[1]+a*X[1]+b*Y[1])/w];}
function f(p){return p[0].toFixed(1)+','+p[1].toFixed(1);}
function seg(a,b){
 var t0=0,t1=1,dx=b[0]-a[0],dy=b[1]-a[1],p=[-dx,dx,-dy,dy],q=[a[0]-L,R-a[0],a[1]-T,B-a[1]];
 for(var i=0;i<4;i++){
  if(p[i]===0){if(q[i]<0)return '';continue;}
  var r=q[i]/p[i];
  if(p[i]<0){if(r>t1)return '';if(r>t0)t0=r;}
  else{if(r<t0)return '';if(r<t1)t1=r;}
 }
 return 'M'+f([a[0]+t0*dx,a[1]+t0*dy])+'L'+f([a[0]+t1*dx,a[1]+t1*dy]);
}
for(var k=-70;k<=70;k++){
 var vmin=(.12-1-k*sx)/sy,umin=(.12-1-k*sy)/sx;
 d+=seg(P(k,vmin),P(k,vmin+400))+seg(P(umin,k),P(umin+400,k));
}
document.getElementById('grid').setAttribute('d',d);
})();
</script>
</body></html>
